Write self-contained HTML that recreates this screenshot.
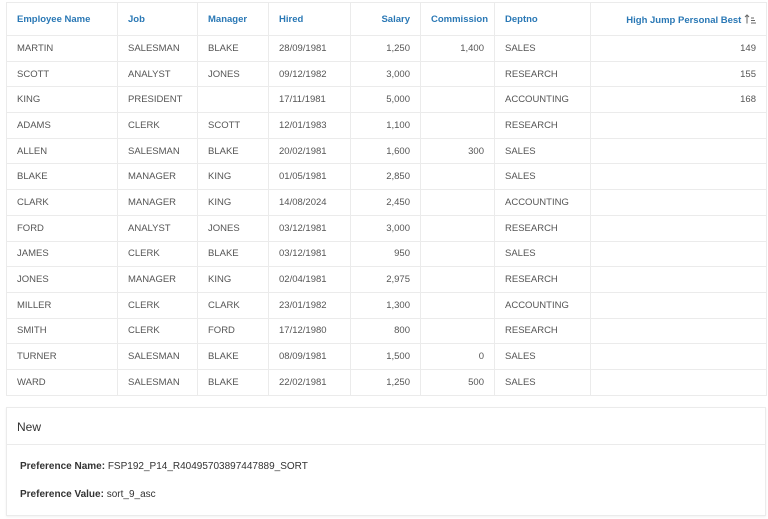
<!DOCTYPE html>
<html><head><meta charset="utf-8"><style>
body{margin:0;width:768px;height:519px;background:#fff;font-family:"Liberation Sans",sans-serif;overflow:hidden;position:relative}
table{position:absolute;left:6px;top:2px;width:760px;border-collapse:collapse;table-layout:fixed;font-size:9.5px;color:#555}
th,td{border:1px solid #ebebeb;padding:0 10px;white-space:nowrap;overflow:hidden}
th{height:33px;color:#2a78b5;font-weight:bold;text-align:left;font-size:9.5px;padding-top:1px;box-sizing:border-box}
td{height:24.7px}
.r{text-align:right}
.panel{position:absolute;left:6px;top:407px;width:758px;height:107px;border:1px solid #ebebeb;box-shadow:0 1px 2px rgba(0,0,0,.06)}
.ph{height:36px;border-bottom:1px solid #ebebeb;font-size:12px;color:#333;line-height:38px;padding-left:10px}
.pb{font-size:10px;color:#333}
.pb div{position:absolute;left:13px}
</style></head><body>
<table>
<colgroup><col style="width:111px"><col style="width:80px"><col style="width:71px"><col style="width:82px"><col style="width:70px"><col style="width:74px"><col style="width:96px"><col style="width:176px"></colgroup>
<tr><th>Employee Name</th><th>Job</th><th>Manager</th><th>Hired</th><th class="r">Salary</th><th class="r">Commission</th><th>Deptno</th><th class="r">High Jump Personal Best <svg width="12" height="10" viewBox="0 0 12 10" style="vertical-align:-1px"><path d="M3 9.5V1M1 3L3 1L5 3M7 4h3M7 6.5h4M7 9h5" stroke="#666" stroke-width="1" fill="none"/></svg></th></tr>
<tr><td>MARTIN</td><td>SALESMAN</td><td>BLAKE</td><td>28/09/1981</td><td class="r">1,250</td><td class="r">1,400</td><td>SALES</td><td class="r">149</td></tr>
<tr><td>SCOTT</td><td>ANALYST</td><td>JONES</td><td>09/12/1982</td><td class="r">3,000</td><td></td><td>RESEARCH</td><td class="r">155</td></tr>
<tr><td>KING</td><td>PRESIDENT</td><td></td><td>17/11/1981</td><td class="r">5,000</td><td></td><td>ACCOUNTING</td><td class="r">168</td></tr>
<tr><td>ADAMS</td><td>CLERK</td><td>SCOTT</td><td>12/01/1983</td><td class="r">1,100</td><td></td><td>RESEARCH</td><td></td></tr>
<tr><td>ALLEN</td><td>SALESMAN</td><td>BLAKE</td><td>20/02/1981</td><td class="r">1,600</td><td class="r">300</td><td>SALES</td><td></td></tr>
<tr><td>BLAKE</td><td>MANAGER</td><td>KING</td><td>01/05/1981</td><td class="r">2,850</td><td></td><td>SALES</td><td></td></tr>
<tr><td>CLARK</td><td>MANAGER</td><td>KING</td><td>14/08/2024</td><td class="r">2,450</td><td></td><td>ACCOUNTING</td><td></td></tr>
<tr><td>FORD</td><td>ANALYST</td><td>JONES</td><td>03/12/1981</td><td class="r">3,000</td><td></td><td>RESEARCH</td><td></td></tr>
<tr><td>JAMES</td><td>CLERK</td><td>BLAKE</td><td>03/12/1981</td><td class="r">950</td><td></td><td>SALES</td><td></td></tr>
<tr><td>JONES</td><td>MANAGER</td><td>KING</td><td>02/04/1981</td><td class="r">2,975</td><td></td><td>RESEARCH</td><td></td></tr>
<tr><td>MILLER</td><td>CLERK</td><td>CLARK</td><td>23/01/1982</td><td class="r">1,300</td><td></td><td>ACCOUNTING</td><td></td></tr>
<tr><td>SMITH</td><td>CLERK</td><td>FORD</td><td>17/12/1980</td><td class="r">800</td><td></td><td>RESEARCH</td><td></td></tr>
<tr><td>TURNER</td><td>SALESMAN</td><td>BLAKE</td><td>08/09/1981</td><td class="r">1,500</td><td class="r">0</td><td>SALES</td><td></td></tr>
<tr><td>WARD</td><td>SALESMAN</td><td>BLAKE</td><td>22/02/1981</td><td class="r">1,250</td><td class="r">500</td><td>SALES</td><td></td></tr>
</table>
<div class="panel">
<div class="ph">New</div>
<div class="pb"><div style="top:53px"><b>Preference Name:</b> FSP192_P14_R40495703897447889_SORT</div><div style="top:81px"><b>Preference Value:</b> sort_9_asc</div></div>
</div>
</body></html>
